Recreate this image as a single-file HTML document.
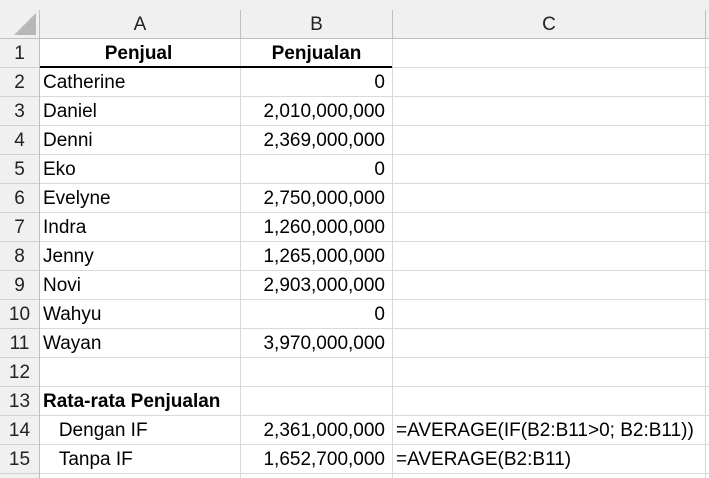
<!DOCTYPE html>
<html><head><style>
html,body{margin:0;width:709px;height:478px;overflow:hidden;background:#fff;font-family:"Liberation Sans",Arial,sans-serif;font-size:19px;color:#000}
.c{position:absolute;box-sizing:border-box;white-space:nowrap;line-height:29px;height:29px}
.vl{position:absolute;width:1px;background:#d9d9d9}
.hl{position:absolute;height:1px;background:#d9d9d9}
</style></head><body>
<div style="position:absolute;left:0;top:0;width:709px;height:38px;background:#f0f0f0"></div>
<div style="position:absolute;left:0;top:38px;width:39px;height:440px;background:#f0f0f0"></div>
<svg style="position:absolute;left:14px;top:13px" width="23" height="23"><polygon points="22,0 22,22 0,22" fill="#b7b7b7"/></svg>
<div id="g"></div>
<script>
var h='';
var W=[[40,240],[241,392],[393,705]];
h+='<div class="vl" style="left:39px;top:10px;height:468px;background:#bfbfbf"></div>';
h+='<div class="vl" style="left:240px;top:10px;height:28px;background:#bfbfbf"></div>';
h+='<div class="vl" style="left:392px;top:10px;height:28px;background:#bfbfbf"></div>';
h+='<div class="vl" style="left:705px;top:10px;height:28px;background:#bfbfbf"></div>';
h+='<div class="hl" style="left:0;top:38px;width:709px;background:#bfbfbf"></div>';
h+='<div class="vl" style="left:240px;top:39px;height:439px"></div>';
h+='<div class="vl" style="left:392px;top:39px;height:439px"></div>';
h+='<div class="vl" style="left:705px;top:39px;height:439px"></div>';
var L=['A','B','C'];
for(var i=0;i<3;i++)h+='<div class="c" style="left:'+W[i][0]+'px;width:'+(W[i][1]-W[i][0])+'px;top:10px;text-align:center;color:#222;font-size:19px">'+L[i]+'</div>';
for(var r=1;r<=15;r++){var t=39+(r-1)*29;
 h+='<div class="hl" style="left:0;top:'+(t+28)+'px;width:39px;background:#d0d0d0"></div>';
 h+='<div class="hl" style="left:40px;top:'+(t+28)+'px;width:669px"></div>';
 h+='<div class="c" style="left:0;width:39px;top:'+t+'px;text-align:center;color:#222;font-size:19px">'+r+'</div>';}
h+='<div style="position:absolute;left:40px;top:66px;width:352px;height:2px;background:#000"></div>';
var A=['','<b>Penjual</b>','Catherine','Daniel','Denni','Eko','Evelyne','Indra','Jenny','Novi','Wahyu','Wayan','','<b>Rata-rata Penjualan</b>','&nbsp;&nbsp;&nbsp;Dengan IF','&nbsp;&nbsp;&nbsp;Tanpa IF'];
var B=['','','0','2,010,000,000','2,369,000,000','0','2,750,000,000','1,260,000,000','1,265,000,000','2,903,000,000','0','3,970,000,000','','','2,361,000,000','1,652,700,000'];
for(var r=1;r<=15;r++){var t=39+(r-1)*29;
 h+='<div class="c" style="left:43px;top:'+t+'px;'+(r==1?'width:197px;left:40px;text-align:center':'')+'">'+A[r]+'</div>';
 if(r==1)h+='<div class="c" style="left:241px;width:151px;top:'+t+'px;text-align:center"><b>Penjualan</b></div>';
 else if(B[r])h+='<div class="c" style="left:241px;width:144px;top:'+t+'px;text-align:right">'+B[r]+'</div>';}
h+='<div class="c" style="left:396px;top:416px">=AVERAGE(IF(B2:B11&gt;0; B2:B11))</div>';
h+='<div class="c" style="left:396px;top:445px">=AVERAGE(B2:B11)</div>';
document.getElementById('g').innerHTML=h;
</script>
</body></html>
